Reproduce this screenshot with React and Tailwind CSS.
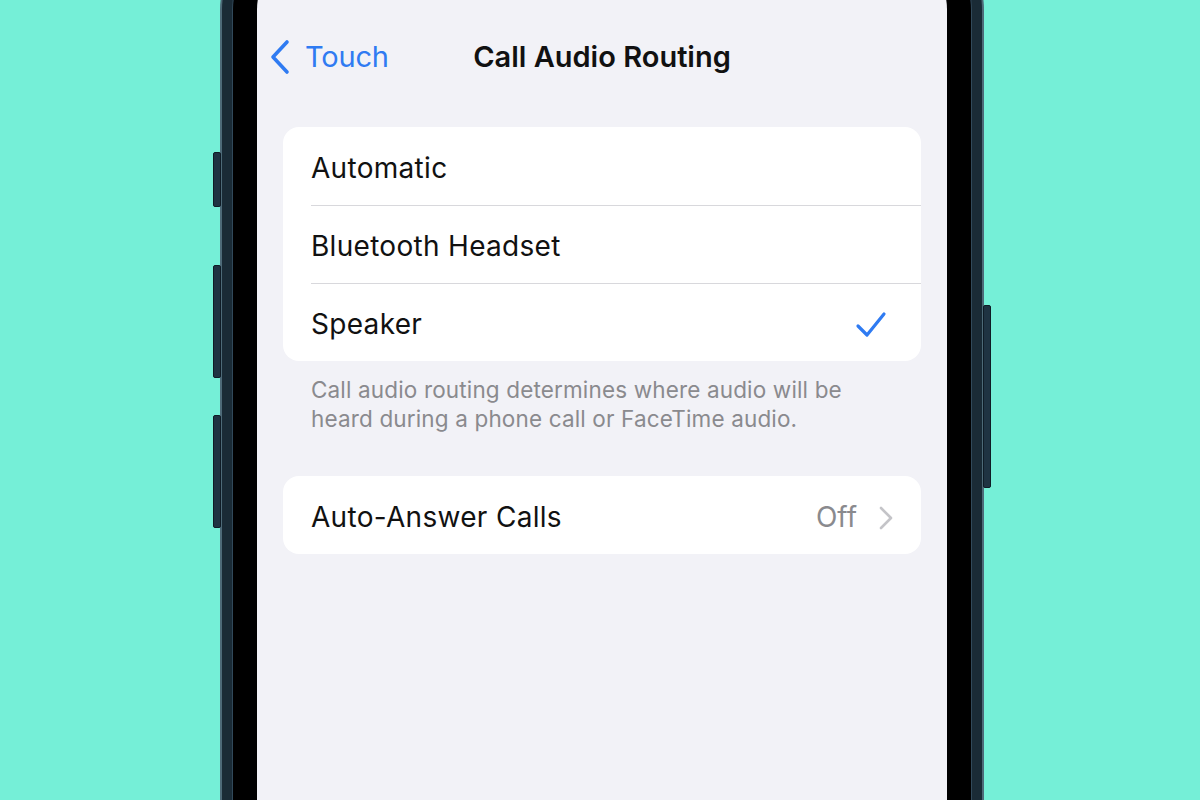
const rows = ['Automatic', 'Bluetooth Headset', 'Speaker'];

const BackChevron = () => (
  <svg width="22" height="36" viewBox="0 0 22 36" fill="none">
    <path d="M18 3 L4 18 L18 33" stroke="#2f7bf2" strokeWidth="3.6" strokeLinecap="round" strokeLinejoin="round" />
  </svg>
);

const Check = () => (
  <svg width="32" height="28" viewBox="0 0 32 28" fill="none" className="mt-[4px]">
    <path d="M3 15 L12 24 L29 3" stroke="#2f7bf2" strokeWidth="3.2" strokeLinecap="round" strokeLinejoin="round" />
  </svg>
);

const Disclosure = () => (
  <svg width="14" height="24" viewBox="0 0 14 24" fill="none" className="mt-[3px]">
    <path d="M2 2 L12 12 L2 22" stroke="#c4c4c8" strokeWidth="2.6" strokeLinecap="round" strokeLinejoin="round" />
  </svg>
);

// side buttons on the phone's frame
const SideButton = ({ className }) => (
  <div className={`absolute w-[8px] rounded-[2px] bg-[#1f3342] border border-[#0f1c26] ${className}`} />
);

const App = () => {
  const selected = 'Speaker';

  return (
    <div className="h-[800px] w-full overflow-hidden bg-[#75efd7] pl-[220px] font-['Inter','Noto_Sans',sans-serif]">
      <div className="relative -mt-[80px] h-[900px] w-[764px] rounded-t-[90px] border-x-2 border-[#4d6a78] bg-[#1a2b36] px-[10px] pt-[12px]">
        <SideButton className="-left-[9px] top-[232px] h-[55px]" />
        <SideButton className="-left-[9px] top-[345px] h-[113px]" />
        <SideButton className="-left-[9px] top-[495px] h-[113px]" />
        <SideButton className="-right-[9px] top-[385px] h-[183px]" />

        <div className="h-full rounded-t-[78px] border-x border-[#31495a] bg-black px-[24px] pt-[25px]">
          <div className="h-full rounded-t-[52px] bg-[#f2f2f7] px-[26px] pt-[77px]">
            {/* navigation bar */}
            <div className="-mx-[26px] grid h-[46px] grid-cols-[1fr_auto_1fr] items-center px-[12px]">
              <div className="flex items-center gap-[14px] text-[29px] text-[#2f7bf2]">
                <BackChevron />
                <span className="tracking-[-0.2px]">Touch</span>
              </div>
              <h1 className="text-[29px] font-semibold text-[#111]">Call Audio Routing</h1>
              <div />
            </div>

            {/* routing options */}
            <div className="mt-[47px] overflow-hidden rounded-[16px] bg-white">
              {rows.map((label, i) => (
                <div key={label} className="flex h-[78px] items-center pl-[28px]">
                  <div
                    className={`flex h-full flex-1 items-center justify-between pr-[34px] ${
                      i > 0 ? 'border-t border-[#d8d8dc]' : ''
                    }`}
                  >
                    <span className="pt-[3px] text-[28px] tracking-[0.3px] text-[#111]">{label}</span>
                    {label === selected && <Check />}
                  </div>
                </div>
              ))}
            </div>
            <p className="mt-[14px] px-[28px] text-[22.5px] leading-[29px] tracking-[0.15px] text-[#8a8a8e]">
              Call audio routing determines where audio will be
              <br />
              heard during a phone call or FaceTime audio.
            </p>

            {/* auto-answer */}
            <div className="mt-[43px] flex h-[78px] items-center justify-between rounded-[16px] bg-white pl-[28px] pr-[28px]">
              <span className="pt-[3px] text-[28px] tracking-[0.3px] text-[#111]">Auto-Answer Calls</span>
              <div className="flex items-center gap-[22px] pt-[3px]">
                <span className="text-[28px] text-[#8a8a8e]">Off</span>
                <Disclosure />
              </div>
            </div>
          </div>
        </div>
      </div>
    </div>
  );
};

export default App;
